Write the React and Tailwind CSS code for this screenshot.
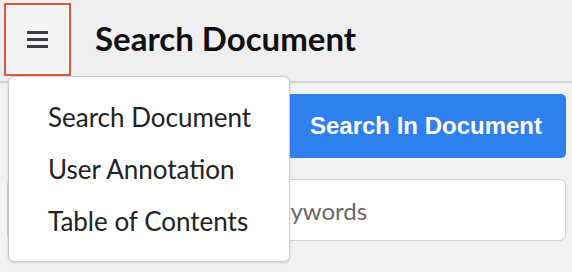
import { useState } from 'react'

const items = ['Search Document', 'User Annotation', 'Table of Contents']

export default function App() {
  const [open] = useState(true)

  return (
    <div className="relative h-[272px] w-[572px] overflow-hidden bg-[#f0f1f3] font-['Lato',sans-serif]">
      <header className="flex h-[83px] items-start border-b-2 border-[#d2d2d4] bg-[#efeff1]">
        <button className="ml-[4px] mt-[3px] flex h-[73px] w-[67px] items-center justify-center border-2 border-[#e2553f] bg-[#f4f4f5]">
          <span className="flex w-[21px] flex-col gap-[4px]">
            <span className="h-[3px] bg-[#3a3d42]" />
            <span className="h-[3px] bg-[#3a3d42]" />
            <span className="h-[3px] bg-[#3a3d42]" />
          </span>
        </button>
        <h1 className="ml-[24px] mt-[18px] text-[33px] font-bold leading-[40px] text-[#111]">
          Search Document
        </h1>
      </header>

      <main className="flex flex-col gap-[21px] pl-[7px] pr-[6px] pt-[11px]">
        <div className="flex justify-end">
          <button className="h-[64px] w-[280px] rounded-[5px] bg-[#2f80ef] font-['Liberation_Sans',sans-serif] text-[24px] font-bold text-white">
            Search In Document
          </button>
        </div>
        <input
          className="h-[62px] w-full rounded-[6px] border border-[#cfcfd1] bg-white pl-[62px] pr-[16px] text-[24px] placeholder:text-[#68686b] outline-none"
          placeholder="Enter one or more keywords"
        />
      </main>

      {open && (
        <nav className="absolute left-[8px] top-[76px] w-[282px] rounded-[6px] border border-[#cdcdcf] bg-white py-[14px] shadow-sm">
          {items.map((label) => (
            <div key={label} className="flex h-[52px] items-center pl-[39px] text-[26px] text-[#222]">
              {label}
            </div>
          ))}
        </nav>
      )}
    </div>
  )
}
